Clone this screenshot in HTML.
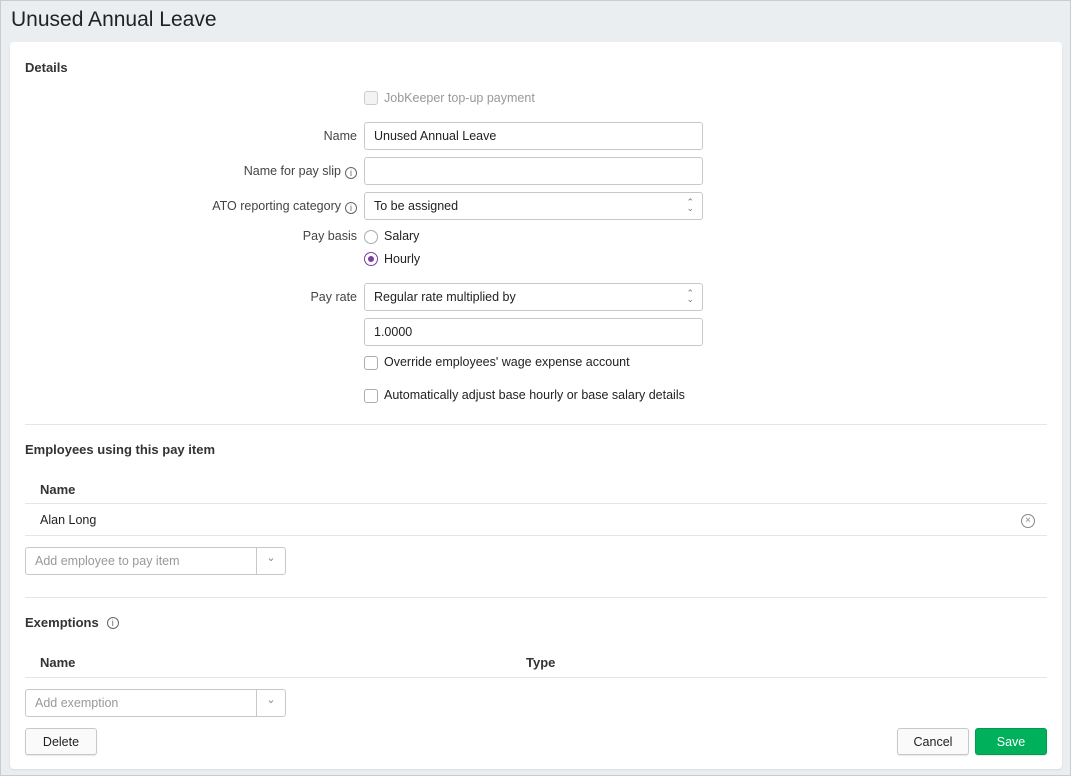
<!DOCTYPE html>
<html><head><style>
*{box-sizing:border-box}
body{margin:0;width:1071px;height:776px;background:#ebeef1;font-family:"Liberation Sans",sans-serif;font-size:12.5px;line-height:17px;color:#222;position:relative;overflow:hidden}
.frame{position:absolute;left:0;top:0;width:1071px;height:776px;border:1px solid #c8cbcf;pointer-events:none}
.a{position:absolute}
.card{left:10px;top:42px;width:1052px;height:727px;background:#fff;border-radius:4px;box-shadow:0 1px 2px rgba(0,0,0,.08)}
.lbl{right:714px;text-align:right;color:#444;white-space:nowrap}
.inp{left:364px;width:339px;height:28px;border:1px solid #c6c9cc;border-radius:3px;padding:0 9px;line-height:27px;background:#fff}
.h{font-weight:bold;font-size:13px;color:#333}
.hr{left:25px;width:1022px;height:1px;background:#e3e5e8}
.cb{width:14px;height:14px;border:1px solid #a8acb0;border-radius:3px;background:#fff}
.rd{width:14px;height:14px;border:1px solid #a8acb0;border-radius:50%}
.info{display:inline-block;width:12px;height:12px;border:1px solid #666;border-radius:50%;font-size:9px;line-height:10px;text-align:center;color:#666;font-weight:normal;vertical-align:-1px;margin-left:4px}
.btn{height:27px;border:1px solid #c6c9cc;border-radius:3px;background:#fafafa;text-align:center;line-height:27px;box-shadow:0 1px 1px rgba(0,0,0,.1)}
.sel{position:absolute;right:8px;top:6px;font-size:9px;color:#777;line-height:6px}
.combo{left:25px;width:261px;height:28px;border:1px solid #c6c9cc;border-radius:3px;color:#999;padding-left:9px;line-height:27px}
.combo:after{content:"⌄";position:absolute;right:0;top:0;width:28px;height:26px;border-left:1px solid #c6c9cc;text-align:center;color:#888;font-size:11px;line-height:20px}
</style></head><body>
<div class="a" style="left:11px;top:7px;font-size:21px;line-height:26px;color:#222">Unused Annual Leave</div>
<div class="a card"></div>
<div class="a h" style="left:25px;top:59px">Details</div>
<div class="a cb" style="left:364px;top:91px;border-color:#ccc;background:#f3f3f3"></div>
<div class="a" style="left:384px;top:90px;color:#999">JobKeeper top-up payment</div>
<div class="a lbl" style="top:128px">Name</div>
<div class="a inp" style="top:122px">Unused Annual Leave</div>
<div class="a lbl" style="top:163px">Name for pay slip<span class="info">i</span></div>
<div class="a inp" style="top:157px"></div>
<div class="a lbl" style="top:198px">ATO reporting category<span class="info">i</span></div>
<div class="a inp" style="top:192px">To be assigned<div class="sel">⌃<br>⌄</div></div>
<div class="a lbl" style="top:228px">Pay basis</div>
<div class="a rd" style="left:364px;top:230px"></div>
<div class="a" style="left:384px;top:228px">Salary</div>
<div class="a rd" style="left:364px;top:252px;border-color:#7b3fa0"><div style="position:absolute;left:3px;top:3px;width:6px;height:6px;border-radius:50%;background:#7b3fa0"></div></div>
<div class="a" style="left:384px;top:251px">Hourly</div>
<div class="a lbl" style="top:289px">Pay rate</div>
<div class="a inp" style="top:283px">Regular rate multiplied by<div class="sel">⌃<br>⌄</div></div>
<div class="a inp" style="top:318px">1.0000</div>
<div class="a cb" style="left:364px;top:356px"></div>
<div class="a" style="left:384px;top:354px">Override employees' wage expense account</div>
<div class="a cb" style="left:364px;top:389px"></div>
<div class="a" style="left:384px;top:387px">Automatically adjust base hourly or base salary details</div>
<div class="a hr" style="top:424px"></div>
<div class="a h" style="left:25px;top:441px">Employees using this pay item</div>
<div class="a h" style="left:40px;top:481px">Name</div>
<div class="a hr" style="top:503px"></div>
<div class="a" style="left:40px;top:512px">Alan Long</div>
<div class="a" style="left:1021px;top:514px;width:14px;height:14px;border:1px solid #888;border-radius:50%;font-size:10px;line-height:12px;text-align:center;color:#888">×</div>
<div class="a hr" style="top:535px"></div>
<div class="a combo" style="top:547px">Add employee to pay item</div>
<div class="a hr" style="top:597px"></div>
<div class="a h" style="left:25px;top:614px">Exemptions<span class="info" style="margin-left:8px;vertical-align:1px">i</span></div>
<div class="a h" style="left:40px;top:654px">Name</div>
<div class="a h" style="left:526px;top:654px">Type</div>
<div class="a hr" style="top:677px"></div>
<div class="a combo" style="top:689px">Add exemption</div>
<div class="a btn" style="left:25px;top:728px;width:72px">Delete</div>
<div class="a btn" style="left:897px;top:728px;width:72px">Cancel</div>
<div class="a btn" style="left:975px;top:728px;width:72px;background:#00b05a;border-color:#009c4f;color:#fff">Save</div>
<div class="frame"></div>
</body></html>
